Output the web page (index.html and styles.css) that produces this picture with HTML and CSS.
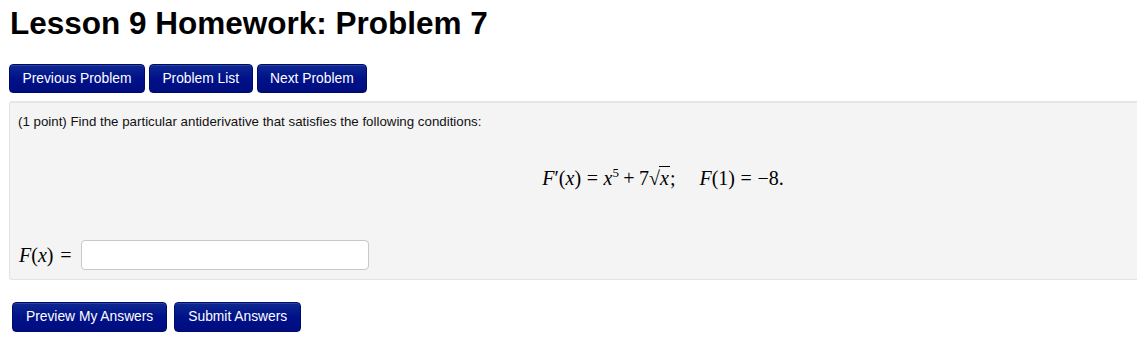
FILE: index.html
```html
<!DOCTYPE html>
<html>
<head>
<meta charset="utf-8">
<link rel="stylesheet" href="styles.css">
</head>
<body>
<div class="page">
  <h1 class="title">Lesson 9 Homework: Problem 7</h1>
  <div class="nav">
    <button class="btn">Previous Problem</button>
    <button class="btn">Problem List</button>
    <button class="btn">Next Problem</button>
  </div>
  <div class="problem">
    <p class="intro">(1 point) Find the particular antiderivative that satisfies the following conditions:</p>
    <div class="display">
      <span class="math"><i>F</i>′(<i>x</i>)<span class="rel">=</span><i>x</i><sup>5</sup><span class="bin">+</span>7<span class="sqrt"><span class="rad">√</span><span class="under"><i>x</i></span></span>;<span class="quad"></span><i>F</i>(1)<span class="rel">=</span>−8.</span>
    </div>
    <div class="answer">
      <span class="math label"><i>F</i>(<i>x</i>)<span class="rel">=</span></span>
      <input class="field" type="text">
    </div>
  </div>
  <div class="actions">
    <button class="btn btn-lg">Preview My Answers</button>
    <button class="btn btn-lg">Submit Answers</button>
  </div>
</div>
</body>
</html>
```

FILE: styles.css
```css
html, body {
  margin: 0;
  padding: 0;
  background: #ffffff;
  overflow: hidden;
}
.page {
  padding: 0 0 0 9px;
  font-family: "Liberation Sans", Arial, sans-serif;
  color: #000;
}
.title {
  margin: 0;
  padding: 4px 0 0 1px;
  font-size: 31.5px;
  line-height: 38px;
  font-weight: bold;
}
.nav {
  display: flex;
  gap: 4px;
  margin-top: 22px;
}
.btn {
  font-family: "Liberation Sans", Arial, sans-serif;
  font-size: 13.8px;
  color: #fff;
  background: linear-gradient(to bottom, #0e2990 0%, #00118a 50%, #000d7e 100%);
  border: 1px solid #000a6a;
  border-radius: 4px;
  height: 29px;
  padding: 0 12.5px;
  line-height: 27px;
  box-shadow: inset 0 1px 0 rgba(255,255,255,0.12);
  cursor: pointer;
}
.problem {
  margin-top: 8px;
  width: 1308px;
  height: 179px;
  box-sizing: border-box;
  background: #f4f4f4;
  border: 1px solid #e3e3e3;
  border-top: 2px solid #e6e6e6;
  border-radius: 3px;
  padding: 0 8px;
}
.intro {
  margin: 11px 0 0 0;
  font-size: 13.3px;
  line-height: 16px;
  color: #111;
}
.display {
  text-align: center;
  margin-top: 37px;
  height: 30px;
}
.math {
  font-family: "Liberation Serif", "Times New Roman", serif;
  font-size: 20px;
  color: #000;
  white-space: nowrap;
}
.math i {
  font-style: italic;
}
.math sup {
  font-size: 13px;
  vertical-align: 8px;
  line-height: 0;
}
.rel {
  margin: 0 0.28em;
}
.bin {
  margin: 0 0.22em;
}
.sqrt {
  display: inline-block;
  white-space: nowrap;
}
.rad {
  font-size: 20px;
}
.under {
  border-top: 1px solid #000;
  padding: 0 1px;
  margin-left: -1px;
}
.quad {
  display: inline-block;
  width: 24px;
}
.answer {
  display: flex;
  align-items: center;
  gap: 9px;
  margin-top: 43px;
  padding-left: 1px;
}
.label .rel {
  margin-right: 0;
  margin-left: 0.34em;
}
.field {
  width: 288px;
  height: 30px;
  box-sizing: border-box;
  border: 1px solid #c8c8c8;
  border-radius: 4px;
  background: #fff;
  margin: 0;
}
.actions {
  display: flex;
  gap: 7px;
  margin-top: 22px;
  padding-left: 3px;
}
.btn-lg {
  height: 30px;
  line-height: 28px;
  padding: 0 13px;
}
```
